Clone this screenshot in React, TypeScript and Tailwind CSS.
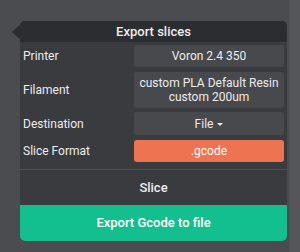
export default function App() {
  const rows = [
    { label: "Printer", value: "Voron 2.4 350" },
    { label: "Filament", value: "custom PLA Default Resin custom 200um" },
  ];

  return (
    <div
      className="w-[300px] h-[252px] pl-[20px] pt-[21px] bg-[linear-gradient(90deg,#4b4c50_0,#4b4c50_289px,#55565a_290px)]"
      style={{ fontFamily: "Roboto, 'Noto Sans', sans-serif" }}
    >
      <div className="relative w-[267px] rounded-[5px] bg-[#3a3b3f] text-[#ececec]">
        {/* pointer */}
        <div className="absolute left-[-8px] top-[4px] w-0 h-0 border-y-[7px] border-y-transparent border-r-[8px] border-r-[#2c2d31]" />

        <div className="h-[21px] rounded-t-[5px] bg-[#2c2d31] flex items-center justify-center text-[13px] font-medium leading-none">
          Export slices
        </div>

        <div className="flex flex-col gap-[4.5px] pt-[3px] pb-[7.5px] pr-[3px] text-[12px]">
          {rows.map((r) => (
            <div key={r.label} className="flex items-center">
              <div className="w-[114px] pl-[3px]">{r.label}</div>
              <button className={`w-[150px] rounded-[3px] bg-[#48494d] leading-[14px] px-1 ${r.label === "Printer" ? "h-[22px]" : "h-[36px]"}`}>
                {r.value}
              </button>
            </div>
          ))}
          <div className="flex items-center">
            <div className="w-[114px] pl-[3px]">Destination</div>
            <button className="w-[150px] h-[23px] rounded-[3px] bg-[#48494d] flex items-center justify-center gap-[4px]">
              File
              <span className="w-0 h-0 border-x-[3px] border-x-transparent border-t-[3px] border-t-[#ececec] mt-[2px]" />
            </button>
          </div>
          <div className="flex items-center">
            <div className="w-[114px] pl-[3px]">Slice Format</div>
            <button className="w-[150px] h-[22px] rounded-[3px] bg-[#ee7351] text-white">.gcode</button>
          </div>
        </div>

        <div className="h-[36px] border-t border-[#505155] flex items-center justify-center text-[13px] font-medium">
          Slice
        </div>
        <button className="w-full h-[36px] rounded-b-[5px] bg-[#13bf8d] text-white text-[13px] font-medium">
          Export Gcode to file
        </button>
      </div>
    </div>
  );
}
